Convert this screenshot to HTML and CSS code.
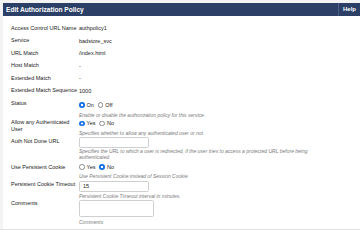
FILE: index.html
```html
<!DOCTYPE html>
<html>
<head>
<meta charset="utf-8">
<link rel="stylesheet" href="styles.css">
</head>
<body>
<div class="page">
  <div class="panel">
    <div class="header">
      <span class="title">Edit Authorization Policy</span>
      <span class="help">Help</span>
    </div>
    <div class="form">
      <div class="row"><div class="label">Access Control URL Name</div><div class="value">authpolicy1</div></div>
      <div class="row"><div class="label">Service</div><div class="value">badstore_svc</div></div>
      <div class="row"><div class="label">URL Match</div><div class="value">/index.html</div></div>
      <div class="row"><div class="label">Host Match</div><div class="value">-</div></div>
      <div class="row"><div class="label">Extended Match</div><div class="value">-</div></div>
      <div class="row"><div class="label">Extended Match Sequence</div><div class="value">1000</div></div>
      <div class="row status"><div class="label">Status</div>
        <div class="value">
          <div class="radios"><span class="radio on"></span><span class="rtext">On</span><span class="radio"></span><span class="rtext">Off</span></div>
          <div class="hint">Enable or disable the authorization policy for this service.</div>
        </div>
      </div>
      <div class="row allow"><div class="label">Allow any Authenticated User</div>
        <div class="value">
          <div class="radios"><span class="radio on"></span><span class="rtext">Yes</span><span class="radio"></span><span class="rtext">No</span></div>
          <div class="hint">Specifies whether to allow any authenticated user or not.</div>
        </div>
      </div>
      <div class="row authurl"><div class="label">Auth Not Done URL</div>
        <div class="value">
          <input class="field" type="text" value="">
          <div class="hint">Specifies the URL to which a user is redirected, if the user tries to access a protected URL before being authenticated.</div>
        </div>
      </div>
      <div class="row cookie"><div class="label">Use Persistent Cookie</div>
        <div class="value">
          <div class="radios"><span class="radio"></span><span class="rtext">Yes</span><span class="radio on"></span><span class="rtext">No</span></div>
          <div class="hint">Use Persistent Cookie instead of Session Cookie</div>
        </div>
      </div>
      <div class="row timeout"><div class="label">Persistent Cookie Timeout</div>
        <div class="value">
          <input class="field" type="text" value="15">
          <div class="hint">Persistent Cookie Timeout interval in minutes.</div>
        </div>
      </div>
      <div class="row comments"><div class="label">Comments</div>
        <div class="value">
          <textarea class="area"></textarea>
          <div class="hint">Comments</div>
        </div>
      </div>
    </div>
  </div>
</div>
</body>
</html>
```
FILE: styles.css
```css
html, body {
  margin: 0;
  padding: 0;
  background: #ffffff;
}
body {
  font-family: "Liberation Sans", Arial, sans-serif;
  color: #222;
}
.page {
  background: #f3f3f3;
  padding: 3px 0 0 3px;
  border-bottom: 1px solid #e2e2e2;
}
.panel {
  background: #ffffff;
  height: 226px;
  overflow: hidden;
}
.header {
  display: flex;
  align-items: center;
  justify-content: space-between;
  height: 13px;
  background: #2b3f67;
  color: #ffffff;
  font-weight: bold;
}
.title {
  font-size: 6.6px;
  padding-left: 3px;
}
.help {
  font-size: 6px;
  height: 13px;
  line-height: 13px;
  padding: 0 4px 0 4px;
  border-left: 1px solid #4d5f85;
}
.form {
  padding: 5.5px 0 0 8px;
}
.row {
  display: flex;
  align-items: flex-start;
  padding: 3px 0;
  font-size: 5.5px;
  line-height: 6.5px;
}
.label {
  width: 68px;
  flex: none;
}
.value {
  flex: 1;
  padding-top: 0.5px;
  margin-bottom: -0.5px;
}
.row.status,
.row.allow,
.row.authurl,
.row.cookie,
.row.timeout,
.row.comments {
  padding-bottom: 0;
}
.row.status { padding-top: 3px; }
.row.allow { padding-top: 0.75px; }
.row.authurl { padding-top: 1px; }
.row.cookie { padding-top: 3.75px; }
.row.timeout { padding-top: 1.75px; }
.row.comments { padding-top: 1px; }
.row.status .value,
.row.allow .value,
.row.authurl .value,
.row.cookie .value,
.row.timeout .value,
.row.comments .value {
  padding-top: 0;
  margin-bottom: 0;
}
.row.allow .label {
  line-height: 7.5px;
}
.row.authurl .label {
  margin-top: 0.75px;
}
.radios {
  display: flex;
  align-items: center;
  height: 7px;
}
.row.status .radios { margin-top: 1.75px; }
.row.allow .radios { margin-top: 1.25px; }
.radio {
  width: 5.5px;
  height: 5.5px;
  border-radius: 50%;
  border: 0.5px solid #8a8a8a;
  box-sizing: border-box;
  background: #fff;
  margin-right: 2px;
}
.radio.on {
  border: none;
  background: radial-gradient(circle, #ffffff 0 0.9px, #1a73e8 1.2px);
}
.rtext {
  margin-right: 4px;
}
.hint {
  font-size: 5px;
  line-height: 6px;
  font-style: italic;
  color: #7a7a7a;
  padding-right: 45px;
}
.row.status .hint { margin-top: 3.5px; }
.row.allow .hint { margin-top: 3px; }
.row.authurl .hint { margin-top: 0; }
.row.cookie .hint { margin-top: 2.5px; }
.row.timeout .hint { margin-top: 1px; }
.row.comments .hint { margin-top: 2px; }
.field {
  display: block;
  box-sizing: border-box;
  width: 70px;
  height: 11px;
  margin: 0;
  padding: 0 3px;
  border: 0.6px solid #cfcfcf;
  border-radius: 1.5px;
  font-family: "Liberation Sans", Arial, sans-serif;
  font-size: 5.5px;
  color: #222;
  background: #fff;
  outline: none;
}
.area {
  display: block;
  box-sizing: border-box;
  width: 75px;
  height: 17px;
  margin: 0;
  padding: 2px;
  border: 0.6px solid #cfcfcf;
  border-radius: 1.5px;
  resize: none;
  background: #fff;
  font-family: "Liberation Sans", Arial, sans-serif;
  font-size: 5.5px;
}
```
